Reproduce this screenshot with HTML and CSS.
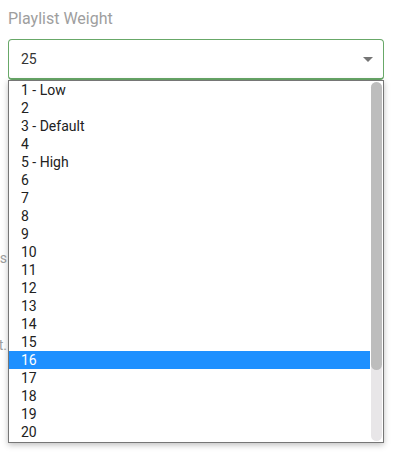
FILE: index.html
```html
<!DOCTYPE html>
<html lang="en">
<head>
    <meta charset="UTF-8">
    <meta name="viewport" content="width=device-width, initial-scale=1.0">
    <title>Playlist Weight</title>
    <link rel="stylesheet" href="styles.css">
</head>
<body>
    <div class="field">
        <label class="field-label">Playlist Weight</label>

        <div class="select">
            <span class="select-value">25</span>
            <svg class="select-arrow" width="10" height="5" viewBox="0 0 10 5">
                <path d="M0 0 L10 0 L5 5 Z" fill="#757575"/>
            </svg>
        </div>

        <div class="options">
            <ul class="option-list">
                <li>1 - Low</li>
                <li>2</li>
                <li>3 - Default</li>
                <li>4</li>
                <li>5 - High</li>
                <li>6</li>
                <li>7</li>
                <li>8</li>
                <li>9</li>
                <li>10</li>
                <li>11</li>
                <li>12</li>
                <li>13</li>
                <li>14</li>
                <li>15</li>
                <li class="hover">16</li>
                <li>17</li>
                <li>18</li>
                <li>19</li>
                <li>20</li>
            </ul>
            <div class="scrollbar">
                <div class="scrollbar-thumb"></div>
            </div>
        </div>
    </div>

    <div class="hints">
        <p class="hint hint-first">Songs with higher weights play more often in this playlist's rotations</p>
        <p class="hint hint-second">Set to 0 to skip this playlist in the mix without removing it.</p>
    </div>
</body>
</html>
```

FILE: styles.css
```css
:root {
    --green: #68a868;
    --grey-text: #9e9e9e;
    --text: #212121;
    --blue: #1e90ff;
}

* {
    box-sizing: border-box;
    margin: 0;
    padding: 0;
}

html, body {
    min-height: 461px;
}

body {
    font-family: Roboto, 'Noto Sans', sans-serif;
    background: #ffffff;
    color: var(--text);
    padding: 9px 8px 0 8px;
}

.field {
    position: relative;
    width: 376px;
}

.field-label {
    display: block;
    font-size: 16px;
    line-height: 20px;
    color: var(--grey-text);
    margin-bottom: 10px;
}

.select {
    height: 41px;
    border: 1px solid var(--green);
    border-bottom-width: 2px;
    border-radius: 4px;
    display: flex;
    align-items: center;
    justify-content: space-between;
    padding: 0 10px 0 12px;
    font-size: 14px;
    color: #333333;
}

.select-arrow {
    margin-top: 1px;
}

/* open dropdown, drawn over the form below */
.options {
    position: absolute;
    top: 71px;
    left: 0;
    width: 376px;
    height: 363px;
    background: #ffffff;
    border: 1px solid #767676;
    box-shadow: 0 2px 6px rgba(0, 0, 0, 0.25);
    overflow: hidden;
    z-index: 2;
}

.option-list {
    list-style: none;
    font-size: 14px;
    margin-right: 13px;
}

.option-list li {
    height: 18px;
    line-height: 18px;
    padding-left: 12px;
}

.option-list li.hover {
    background: var(--blue);
    color: #ffffff;
}

.scrollbar {
    position: absolute;
    top: 1px;
    right: 1px;
    width: 11px;
    height: 359px;
    background: #e8e6e8;
    border-radius: 6px;
}

.scrollbar-thumb {
    height: 288px;
    background: #bdbdbd;
    border-radius: 6px;
}

.hints {
    padding-top: 170px;
}

.hint {
    font-size: 14px;
    color: var(--grey-text);
    white-space: nowrap;
    width: 600px;
    margin-left: -601px;
    text-align: right;
}

.hint-second {
    margin-top: 71px;
}
```
